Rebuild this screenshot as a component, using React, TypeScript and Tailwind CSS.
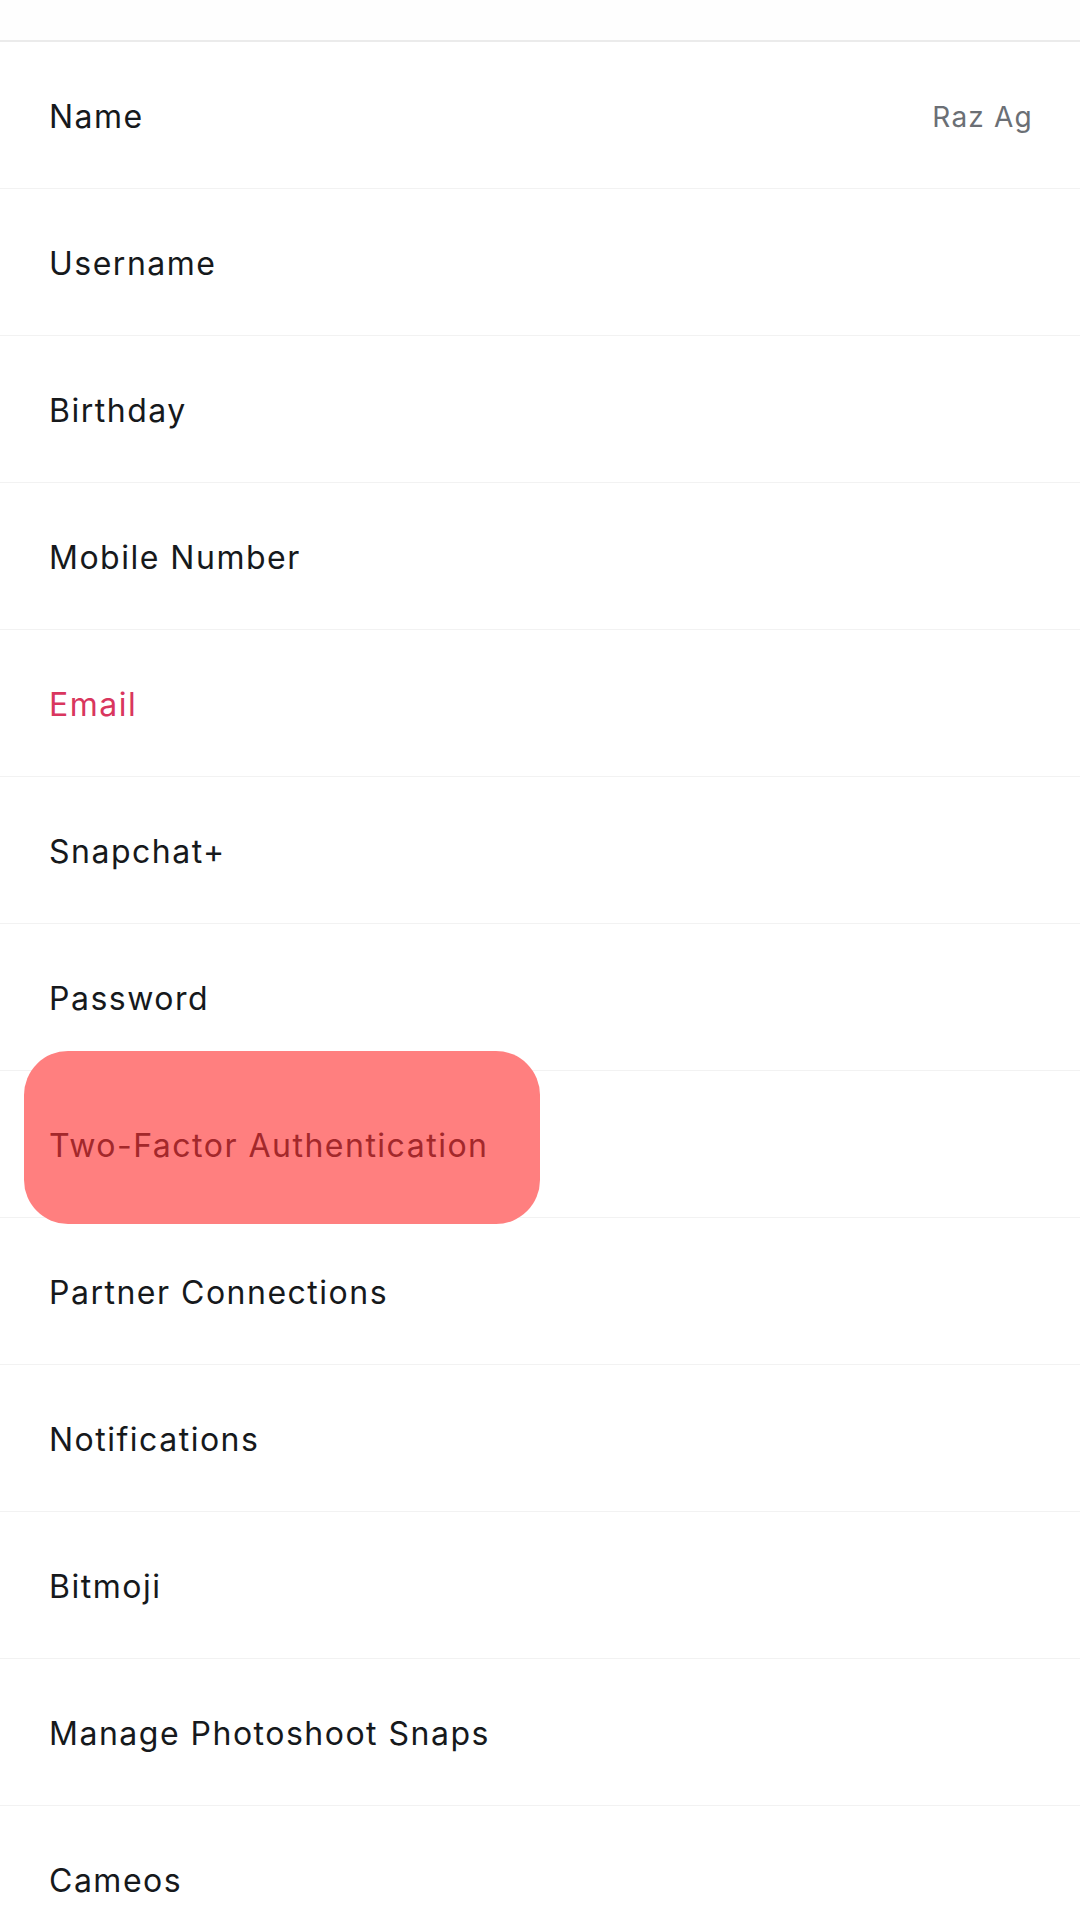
import React from "react";

const rows: { label: string; value?: string; tone?: "red" | "hl" }[] = [
  { label: "Name", value: "Raz Ag" },
  { label: "Username" },
  { label: "Birthday" },
  { label: "Mobile Number" },
  { label: "Email", tone: "red" },
  { label: "Snapchat+" },
  { label: "Password" },
  { label: "Two-Factor Authentication", tone: "hl" },
  { label: "Partner Connections" },
  { label: "Notifications" },
  { label: "Bitmoji" },
  { label: "Manage Photoshoot Snaps" },
  { label: "Cameos" },
];

export default function App() {
  return (
    <div
      className="w-[1080px] h-[1920px] overflow-hidden bg-white"
      style={{ fontFamily: 'Inter, "Noto Sans", sans-serif' }}
    >
      <div className="h-[40px] bg-[#fefefe] border-b-2 border-[#ebebeb] box-content" />
      <div className="flex flex-col">
        {rows.map((r) => (
          <div
            key={r.label}
            className="relative h-[147px] shrink-0 border-b border-[#f2f2f2] flex items-center justify-between pl-[49px] pr-[47px] pt-[3px]"
          >
            {r.tone === "hl" && (
              <div className="absolute left-[24px] top-[-20px] w-[516px] h-[173px] rounded-[44px] bg-[#ff7f7f]" />
            )}
            <span
              className={
                "relative text-[32px] leading-none tracking-[1.5px] " +
                (r.tone === "red"
                  ? "text-[#d9365e]"
                  : r.tone === "hl"
                  ? "text-[#a3282b]"
                  : "text-[#16191c]")
              }
            >
              {r.label}
            </span>
            {r.value && (
              <span className="relative text-[28px] leading-none tracking-[1.2px] text-[#6b6f75]">
                {r.value}
              </span>
            )}
          </div>
        ))}
      </div>
    </div>
  );
}
